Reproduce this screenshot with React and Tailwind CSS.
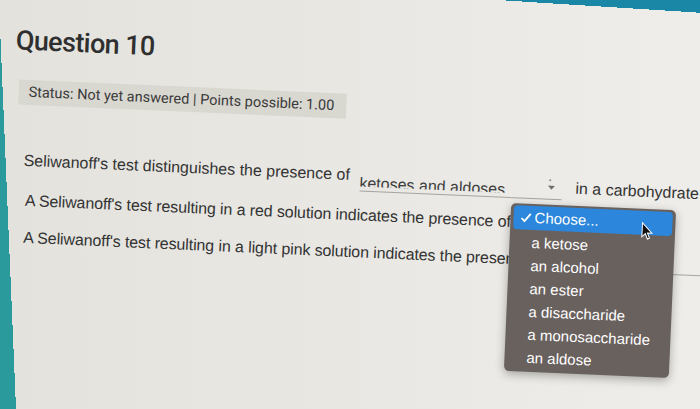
const Select = ({ width, label, top = "mt-[6.5px]" }) => {
  return (
    <div
      className={`ml-[10px] shrink-0 border-b border-[#a5a4a0] pb-[4px] ${top} ${width}`}
    >
      <div className="flex h-[16px] items-start justify-between overflow-hidden">
        <span className="pt-[5px] leading-[16px] text-[#3d3d3d]">{label}</span>
        <svg width="9" height="14" viewBox="0 0 9 14" className="mr-[6px] shrink-0">
          <circle cx="3" cy="1.5" r="1" fill="#8a8a8a" />
          <polygon points="1,7 8,7 4.5,11" fill="#6f6f6f" />
        </svg>
      </div>
    </div>
  );
};

const options = [
  "a ketose",
  "an alcohol",
  "an ester",
  "a disaccharide",
  "a monosaccharide",
  "an aldose",
];

const Dropdown = () => {
  return (
    <div className="absolute left-[511px] top-[195.5px] w-[165px] rounded-[5px] bg-[#69615e] px-[3px] pb-[3px] pt-[2px] text-[15px] text-white shadow-[0_3px_10px_rgba(0,0,0,0.3)] [font-family:'Liberation_Sans',Arial,sans-serif]">
      <div className="flex h-[24px] items-center rounded-[4px] bg-[#2c86db] leading-[24px]">
        <span className="flex w-[21px] shrink-0 justify-start pl-[7px]">
          <svg width="11" height="10" viewBox="0 0 11 10">
            <path d="M1 5.5 L4 8.5 L10 1" fill="none" stroke="white" strokeWidth="1.8" />
          </svg>
        </span>
        <span>Choose...</span>
      </div>
      <div className="mt-[1.6px] flex flex-col">
        {options.map((o) => (
          <div key={o} className="h-[23px] pl-[19px] leading-[23px]">
            {o}
          </div>
        ))}
      </div>
    </div>
  );
};

export default function App() {
  return (
    <div className="relative h-[409px] w-[700px] overflow-hidden bg-[linear-gradient(183.6deg,#1b87a6_12.7px,transparent_12.7px),linear-gradient(87.6deg,#2b9a9c_16px,transparent_16px),linear-gradient(90deg,#e3e2dd,#eeede9)]">
      <div className="relative h-full w-full rotate-[2.5deg] pl-[9px] pt-[39px] text-[#333]">
        <h1 className="text-[27px] font-medium leading-[32px] tracking-[-0.6px] text-[#2f2f2f] [font-family:Roboto,sans-serif]">
          Question 10
        </h1>
        <div className="ml-[5px] mt-[23px] h-[25px] w-[328px] bg-[#d8d7d0] pl-[10px] text-[14.5px] leading-[25px] text-[#3a3a3a] [font-family:Roboto,sans-serif]">
          Status: Not yet answered | Points possible: 1.00
        </div>

        <div className="mt-[44px] flex flex-col whitespace-nowrap pl-[13px] text-[16px] [font-family:'Liberation_Sans',Arial,sans-serif]">
          <div className="flex items-start">
            <span className="shrink-0 leading-[24px]">
              Seliwanoff's test distinguishes the presence of
            </span>
            <Select width="w-[202px]" label="ketoses and aldoses" />
            <span className="ml-[14px] mt-[4px] shrink-0 leading-[24px]">
              in a carbohydrate
            </span>
          </div>
          <div className="ml-[3px] mt-[12px] flex items-start tracking-[-0.1px]">
            <span className="shrink-0 leading-[24px]">
              A Seliwanoff's test resulting in a red solution indicates the presence of
            </span>
            <Select width="w-[150px]" label="" />
          </div>
          <div className="ml-[3px] mt-[9px] flex items-start tracking-[-0.1px]">
            <span className="shrink-0 leading-[24px]">
              A Seliwanoff's test resulting in a light pink solution indicates the presence of
            </span>
            <Select width="w-[202px]" label="" top="mt-[0px]" />
          </div>
        </div>

        <Dropdown />

        <svg
          width="12"
          height="19"
          viewBox="0 0 12 19"
          className="absolute left-[642px] top-[209px]"
        >
          <path
            d="M1 1 L1 15 L4.3 11.8 L6.6 17 L8.6 16.1 L6.4 11 L10.8 11 Z"
            fill="#111"
            stroke="white"
            strokeWidth="1"
          />
        </svg>
      </div>
    </div>
  );
}
